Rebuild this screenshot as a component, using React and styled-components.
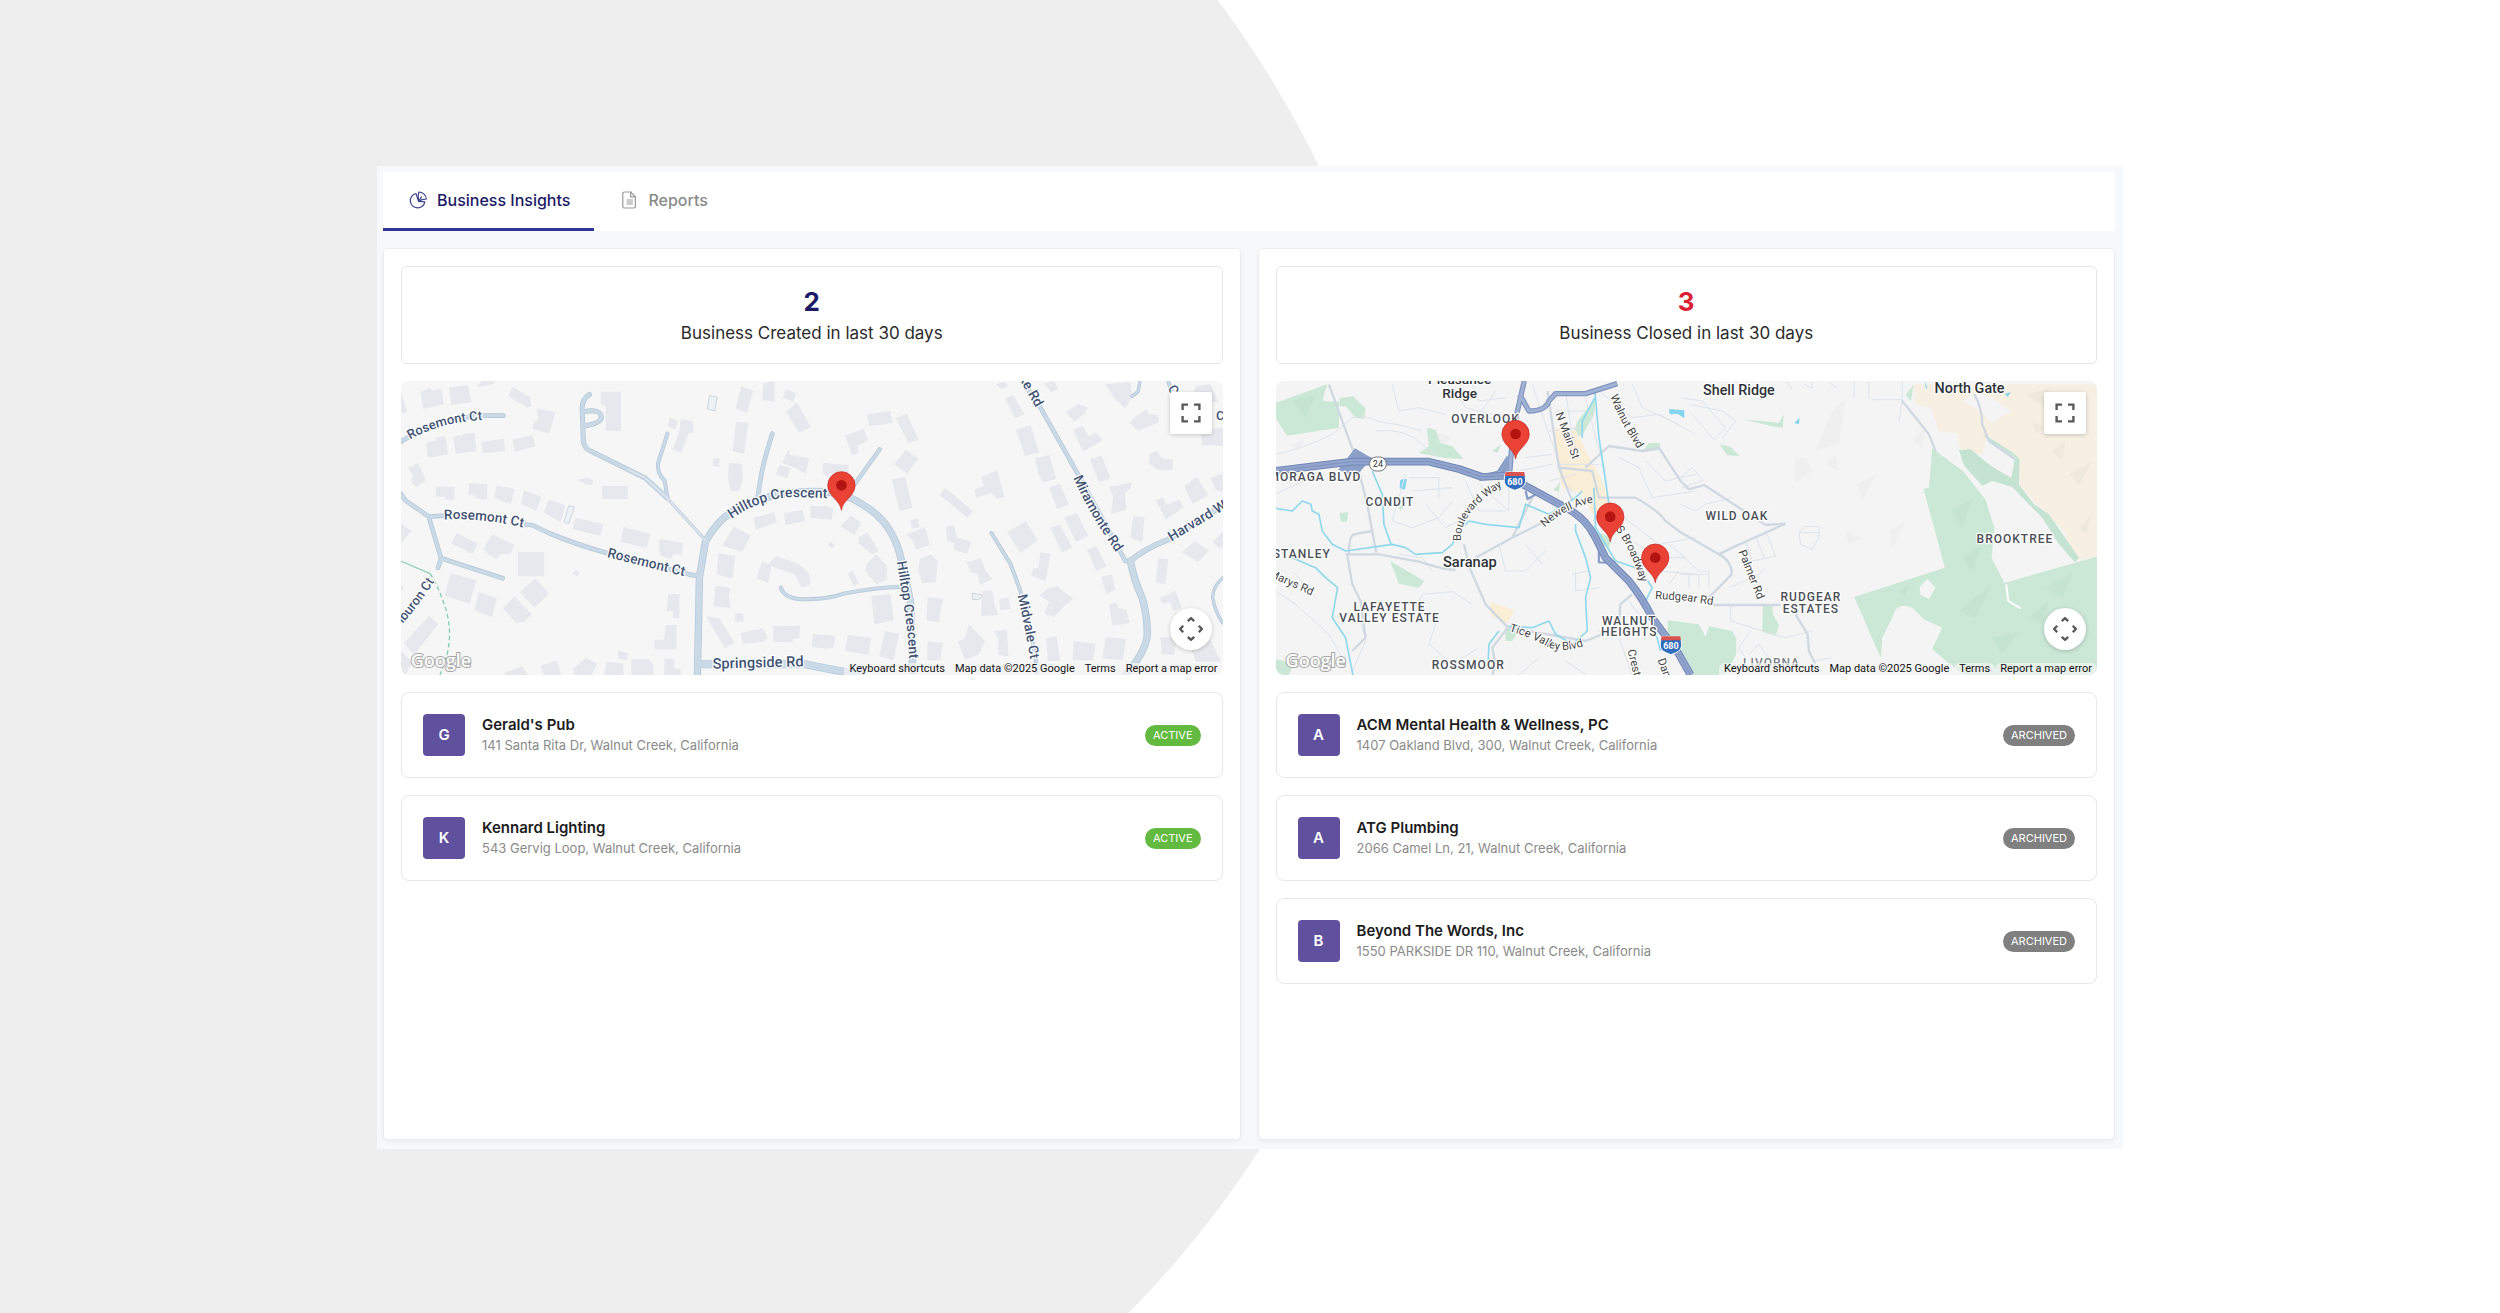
import React from "react";
import styled, { createGlobalStyle } from "styled-components";

const GlobalStyle = createGlobalStyle`
  *, *::before, *::after { box-sizing: border-box; }
  body { margin: 0; background: #fff; }
  button { font: inherit; }
`;

const Page = styled.div`
  display: flex;
  min-height: 100vh;
  padding: 166px 377px 164px;
  font-family: Inter, "Liberation Sans", sans-serif;
  color: #222;
  background: radial-gradient(circle at 413px 605px, #eeeeee 1006px, #ffffff 1007px);
`;

const Shell = styled.main`
  flex: 1;
  display: flex;
  flex-direction: column;
  gap: 17px;
  min-width: 0;
  padding: 6px 8px 9px 6px;
  background: #f7f8fa;
`;

const TabBar = styled.nav`
  display: flex;
  height: 59px;
  background: #fff;
`;

const Tab = styled.button`
  display: flex;
  align-items: center;
  gap: 10px;
  padding: 0 24px 0 26px;
  border: 0;
  border-bottom: 3px solid ${(p) => (p.$active ? "#2f3499" : "transparent")};
  background: none;
  font-size: 16px;
  line-height: 24px;
  font-weight: 500;
  color: ${(p) => (p.$active ? "#1b1a66" : "#8a8a8a")};
  cursor: pointer;
`;

const TabIcon = styled.svg`
  width: 18px;
  height: 18px;
  fill: none;
  stroke: ${(p) => (p.$active ? "#3f4390" : "#9a9a9a")};
  stroke-width: 1.2;
  stroke-linejoin: round;
  stroke-linecap: round;
`;

const Columns = styled.div`
  flex: 1;
  display: grid;
  grid-template-columns: repeat(2, minmax(0, 1fr));
  gap: 17px;
`;

const Card = styled.section`
  display: flex;
  flex-direction: column;
  gap: 17px;
  padding: 17px;
  border: 1px solid #ececee;
  border-radius: 5px;
  background: #fff;
  box-shadow: 0 2px 4px rgba(0, 0, 0, 0.05);
`;

const Stat = styled.div`
  padding: 19px 0 15px;
  border: 1px solid #e6e6e8;
  border-radius: 5px;
  text-align: center;
`;

const StatValue = styled.div`
  font-size: 26px;
  line-height: 32px;
  font-weight: 700;
  color: ${(p) => p.$color};
`;

const StatLabel = styled.div`
  font-size: 17px;
  line-height: 30px;
  color: #2a2a2a;
`;

const MapFrame = styled.div`
  position: relative;
  height: 294px;
  border-radius: 8px;
  overflow: hidden;
`;

const MapDrawing = styled.svg`
  display: block;
  width: 100%;
  height: 100%;
  font-family: Roboto, "Liberation Sans", sans-serif;
`;

const MapButton = styled.button`
  position: absolute;
  right: 11px;
  ${(p) => (p.$round ? "bottom: 25px;" : "top: 11px;")}
  display: grid;
  place-items: center;
  width: 42px;
  height: 42px;
  padding: 0;
  border: 0;
  border-radius: ${(p) => (p.$round ? "50%" : "2px")};
  background: #fff;
  box-shadow: 0 1px 4px rgba(0, 0, 0, 0.2);
  cursor: pointer;

  svg {
    width: 24px;
    height: 24px;
    fill: none;
    stroke: #5a5a5a;
    stroke-width: 2.4;
  }
`;

const MapFooter = styled.div`
  position: absolute;
  right: 0;
  bottom: 0;
  display: flex;
  font-family: Roboto, "Liberation Sans", sans-serif;
  font-size: 11px;
  line-height: 12px;
  color: #111;

  > * {
    padding: 0 5px;
    border: 0;
    border-radius: 6px 6px 0 0;
    background: rgba(245, 245, 245, 0.7);
    color: inherit;
    text-decoration: none;
    white-space: nowrap;
  }
`;

const List = styled.ul`
  display: flex;
  flex-direction: column;
  gap: 17px;
  margin: 0;
  padding: 0;
  list-style: none;
`;

const Row = styled.li`
  display: flex;
  align-items: center;
  gap: 17px;
  height: 86px;
  padding: 0 21px;
  border: 1px solid #e8e8ea;
  border-radius: 8px;
`;

const Avatar = styled.div`
  flex: none;
  width: 42px;
  border-radius: 4px;
  background: #60519f;
  color: #fff;
  font-size: 15px;
  line-height: 42px;
  font-weight: 600;
  text-align: center;
`;

const Info = styled.div`
  flex: 1;
  min-width: 0;
`;

const Name = styled.div`
  font-size: 15px;
  line-height: 21px;
  font-weight: 600;
  color: #1c1c1c;
`;

const Address = styled.div`
  font-size: 13px;
  line-height: 21px;
  color: #8a8a8a;
`;

const Badge = styled.span`
  padding: 0 8px;
  border-radius: 11px;
  background: ${(p) => (p.$archived ? "#808080" : "#63ba41")};
  color: #fff;
  font-size: 11px;
  line-height: 21px;
`;

/* ---------- map drawings ---------- */

const Building = styled.path`
  fill: #e7e8ed;
`;

const RoadEdge = styled.path`
  fill: none;
  stroke: #b3c6d9;
  stroke-width: ${(p) => p.$w};
  stroke-linecap: round;
  stroke-linejoin: round;
`;

const RoadFill = styled(RoadEdge)`
  stroke: ${(p) => p.$color || "#c9d9e6"};
`;

const Line = styled.path`
  fill: none;
  stroke: ${(p) => p.$color};
  stroke-width: ${(p) => p.$w};
  stroke-linejoin: round;
`;

const Label = styled.text`
  font-size: ${(p) => p.$size || 39}px;
  font-weight: ${(p) => p.$weight || 500};
  fill: ${(p) => p.$color || "#3f5373"};
  stroke: #fff;
  stroke-width: 7;
  stroke-linejoin: round;
  paint-order: stroke;
  text-anchor: ${(p) => p.$anchor || "start"};
`;

const Area = styled(Label)`
  font-size: 36px;
  letter-spacing: 3px;
`;

const Logo = styled.text`
  font-family: "Open Sans", Roboto, sans-serif;
  font-size: 54px;
  font-weight: 600;
  fill: #fff;
  stroke: #a6a6a6;
  stroke-width: 6;
  paint-order: stroke;
`;

const Pin = ({ x, y }) => (
  <g transform={`translate(${x} ${y})`}>
    <path d="M0 75C-3 45-41 33-41 0A41 41 0 0 1 41 0C41 33 3 45 0 75Z" fill="#ea4335" stroke="#c5221f" strokeWidth="2" />
    <circle r="16" fill="#b31412" />
  </g>
);

const Shield = ({ x, y }) => (
  <g transform={`translate(${x} ${y})`}>
    <path d="M-27-25H27C33-8 34 6 28 14C22 24 8 26 0 30C-8 26-22 24-28 14C-34 6-33-8-27-25Z" fill="#2f6dbd" stroke="#fff" strokeWidth="3" />
    <path d="M-28-25H28L30-13H-30Z" fill="#d9534f" />
    <text y="14" textAnchor="middle" fontSize="27" fontWeight="700" fill="#fff">680</text>
  </g>
);

const PathLabel = ({ id, d, children, ...rest }) => (
  <>
    <path id={id} d={d} fill="none" />
    <Label {...rest}>
      <textPath href={`#${id}`}>{children}</textPath>
    </Label>
  </>
);

const WEST_BUILDINGS =
  "M75 62L103 52L112 60L137 52L145 100L84 114Z M161 50L218 42L228 94L168 102Z M247 45L258 30H297L296 38L250 48Z M16 62L36 124L16 128Z " +
  "M352 47L403 78L408 104L396 110L339 76Z M424 112L480 124L462 188L411 174L417 150L428 147Z M616 62H677V180H631V104L616 98Z " +
  "M91 216L120 208L124 198L150 196L158 250L98 260Z M174 200L186 192L200 196L204 188L238 186L243 240L181 248Z M258 212L324 204L330 240L262 247Z M350 206L411 192L420 226L358 242Z " +
  "M38 290L68 276L92 328L62 348L48 334L52 314Z M121 348H177V386H150V378L122 376Z M221 336L276 340L274 386L240 382V374L219 370Z M304 344L358 354L346 398L318 390L296 378Z M386 358L438 378L422 420L376 398Z M460 386L510 402L496 454L446 424Z " +
  "M545 326L576 320L593 326L590 342L570 340Z M620 345H697V384H620Z M540 440L624 460L614 494L532 474Z M684 468L764 488L754 531L675 512Z M793 504L864 516L858 552L836 548L826 564L796 554L790 530Z " +
  "M184 486L246 518L232 548L168 518Z M290 490L356 522L346 548L316 550L304 563L280 552L264 534Z M368 543H446V616H368Z M420 621L461 668L417 710L374 664Z " +
  "M166 607L243 628L222 698L148 674Z M250 662L304 682L290 738L237 718Z M358 677L410 730L386 752L362 755L322 712Z M540 596L552 604L546 616L532 608Z " +
  "M102 734L128 760L56 852L26 816Z M16 456L48 480L16 518Z M16 640L26 652L16 660Z M16 840L50 872L30 912H16Z " +
  "M818 669H852V741H834L832 720H814Z M811 762H843V834H777V806H806Z M328 905L380 886L398 912H328Z M434 884L484 869L498 912H446Z M534 892L572 860L606 878L588 912H536Z M668 838L698 846L694 868L668 862Z M634 872L684 878V912H626Z M708 864H760L774 880V912H708Z M808 862L836 864V890L856 896V912H806Z " +
  "M1038 46L1074 60L1054 126L1020 112Z M1104 36L1138 30V92L1100 86Z M1172 54L1202 66L1194 92L1162 80Z M1204 94L1246 168L1212 186L1172 122Z " +
  "M1022 152L1058 156L1046 248L1012 240Z M824 140L848 150L840 176L816 164Z M856 144L892 150L894 184L880 186L858 246L832 236L852 178Z M954 262L974 264L970 288L952 284Z M1000 276L1040 278L1042 330L1030 360H1006L998 320Z " +
  "M1166 262L1180 234L1184 252L1242 262L1230 308L1200 290L1160 276Z M1152 282L1186 292L1174 322L1142 310Z M1284 276H1300V320L1282 308Z " +
  "M1074 440L1136 424L1144 454L1082 476Z M1166 426L1222 416L1228 450L1170 462Z M1246 406H1300V444L1246 440Z M1016 466L1066 494L1040 542L980 524Z M970 546L1020 556L1010 624L964 610Z M960 644L1004 650L1000 676L1006 712L954 706Z " +
  "M1100 570L1128 584L1118 636L1084 622Z M1142 556L1210 580L1240 606L1246 640L1220 650L1196 610L1140 590L1120 580Z M1020 726L1044 728L1044 752L1018 752Z M932 736L972 742L1018 816L988 832Z " +
  "M1036 786L1102 772L1118 800L1102 812L1042 818Z M1134 766L1214 764L1212 802L1192 804V814L1134 812Z M1252 790L1300 794V834L1250 828Z";

const EAST_BUILDINGS =
  "M170 130L240 120L246 156L176 166Z M256 142L290 128L324 206L294 216Z M104 194L160 174L172 208L142 224L144 246L124 252Z M38 276L114 282V310L40 308Z M286 236L324 264L290 308L252 280Z " +
  "M244 326L284 318L306 410L268 420Z M0 404L68 412L64 446L0 440Z M122 434L152 454L132 492L90 466Z M144 500L170 484L206 540L186 550L146 520Z M60 512L74 522L66 532L52 522Z " +
  "M198 550L230 586L228 626L198 640L164 600L170 576Z M112 608L128 600L146 636L130 644Z M298 450L320 442L328 468L306 474Z M288 490L344 468L358 522L318 536L308 510Z M328 564L362 550L382 570L376 634L336 636L324 600Z " +
  "M182 676L240 670L250 748L192 760Z M352 678L400 684L392 708L386 754L348 748Z M8 790L76 794L68 832L6 824Z M112 792L182 800L174 852L104 840Z M224 780L266 788L250 868L206 856Z M352 812L398 816L390 868H350Z " +
  "M404 350L488 420L470 440L388 372Z M406 468L430 462L440 500L482 512L470 548L430 536V516L410 510Z M514 318L560 298L582 378L560 384L544 366L498 380L492 356L520 344Z " +
  "M590 484L646 450L682 508L630 546Z M468 574L512 562L526 600L546 624L508 642L502 608L482 604Z M516 660H546L552 700L564 732L512 736Z M566 684L594 680L600 714L570 718Z M476 760L524 810L506 850L464 866L442 812L464 800Z M552 780L590 776L594 856L564 852V806Z " +
  "M690 544L720 548L706 630L662 614L670 590L684 592Z M712 652L740 646L788 684L760 706L732 738L702 728L716 692L688 674Z M708 802L738 796L750 870H712Z M790 810L856 818L848 868H786Z M886 798L946 804L938 868L876 862Z " +
  "M556 40L584 32L592 46L572 54Z M584 82L608 72L642 130L614 142Z M700 36L730 30L744 54L722 64Z M616 176L660 162L686 244L644 256Z M674 262L716 252L738 324L698 334L684 310Z M716 350L748 338L776 400L740 414Z " +
  "M766 124L804 98L832 110L822 128L792 152Z M788 176L816 164L836 196L856 184L876 208L818 242Z M838 264L874 254L900 322L866 334Z M762 440L800 426L834 494L796 512Z M720 470L748 460L786 530L754 544Z M896 348L964 334L960 354L944 364L948 416L902 428L908 376Z " +
  "M830 536L858 524L888 586L858 600Z M872 618L904 610L914 656L888 670Z M896 698L918 696L926 712L948 718L958 756L906 764Z M968 436L1002 438L996 514L960 500Z " +
  "M884 40L960 34L966 74L944 112L914 84Z M956 154L1006 114L1016 130L1042 132L1046 154L982 180Z M1018 248L1040 240L1056 262L1088 266L1086 298L1042 296L1016 278Z M1170 176L1240 170V224L1174 222Z M1156 46L1200 40L1214 66H1150Z M1148 60L1204 50L1224 94H1152Z " +
  "M1200 320L1240 306V364L1216 356Z M1122 346L1158 318L1194 372L1146 400Z M1036 388L1056 380L1070 402L1106 386L1120 410L1066 446Z M1114 544L1154 510L1196 540L1162 572Z M1206 512L1240 480V528L1226 530Z M1044 562L1074 564L1064 640L1036 634Z " +
  "M1048 680L1096 660L1114 710L1088 720L1080 694L1056 698Z M1050 798L1100 800L1090 852L1054 850Z M1142 834L1200 808L1232 872H1156Z";

const CreatedMap = () => {
  const roads = [
    [14, "M16 212L60 186Q130 140 270 134H324"],
    [14, "M16 368L30 388L100 437L137 562L128 590M100 437L150 434M380 460L410 462L460 486Q540 520 632 545L880 610L916 616M137 562L322 622"],
    [15, "M582 70Q560 85 560 110L564 214Q570 236 590 242L690 292L748 320L814 380M566 122Q618 112 618 140Q614 158 570 164"],
    [12, "M816 188L788 276Q784 306 808 330L816 380"],
    [14, "M1131 188Q1104 270 1096 320L1086 384"],
    [22, "M906 912L912 620L930 512Q970 440 1030 410Q1120 370 1200 364Q1330 350 1400 400Q1490 450 1516 560L1545 690L1552 900"],
    [24, "M912 880H960L1230 880Q1330 900 1400 912"],
    [12, "M1156 650Q1166 680 1210 684Q1290 688 1345 668Q1430 650 1520 647"],
    [13, "M1370 350L1453 235"],
    [14, "M1880 30L1935 110L2048 310L2190 570"],
    [22, "M2205 570Q2215 625 2240 680Q2258 740 2255 800Q2245 850 2190 912"],
    [17, "M2203 572Q2240 536 2320 505L2482 404"],
    [12, "M1788 486L1846 580L1875 660L1920 850L1924 912"],
    [10, "M2234 30L2228 62L2210 76"],
    [12, "M2318 30L2340 90"],
    [10, "M2482 620Q2450 650 2452 680Q2458 720 2482 756"],
  ];
  return (
    <MapDrawing viewBox="16 30 2466 882" preserveAspectRatio="xMidYMid slice" role="img" aria-label="Map of created businesses">
      <rect x="0" y="0" width="2520" height="940" fill="#f6f6f6" />
      <Building d={WEST_BUILDINGS} />
      <Building d={EAST_BUILDINGS} transform="translate(1245 0)" />
      <path d="M942 74L965 78L958 120L936 114ZM520 404L537 408L520 458L506 452ZM1730 666L1760 672L1754 684L1732 686Z" fill="#eef1f4" stroke="#cdd6e0" strokeWidth="3" />
      <Line d="M16 570L104 608" $color="#8fd0b6" $w={4} />
      <Line d="M104 608Q126 640 150 710Q172 780 155 850L134 912" $color="#7fceb0" $w={4} strokeDasharray="13 9" />
      {roads.map(([w, d]) => <RoadEdge key={d} $w={w} d={d} />)}
      <RoadEdge $w={9} d="M700 296L748 320L814 380L930 508" />
      {roads.map(([w, d]) => <RoadFill key={d} $w={w - 4} d={d} />)}
      <RoadFill $w={5} $color="#dfe5ec" d="M700 296L748 320L814 380L930 508" />
      <PathLabel id="rosemont-a" d="M44 206Q140 150 280 146">Rosemont Ct</PathLabel>
      <PathLabel id="rosemont-b" d="M146 446Q270 440 400 474" $size={41}>Rosemont Ct</PathLabel>
      <PathLabel id="rosemont-c" d="M634 558L900 624" $size={41}>Rosemont Ct</PathLabel>
      <PathLabel id="tiburon" d="M6 776Q76 700 144 588">Tiburon Ct</PathLabel>
      <PathLabel id="hilltop-a" d="M1008 444Q1100 380 1200 378L1360 384" $size={42}>Hilltop Crescent</PathLabel>
      <PathLabel id="hilltop-b" d="M1504 572Q1522 680 1536 780L1546 930" $size={41}>Hilltop Crescent</PathLabel>
      <PathLabel id="springside" d="M952 893L1260 885" $size={44}>Springside Rd</PathLabel>
      <PathLabel id="lake-rd" d="M1870 22L1950 160" $size={41}>ke Rd</PathLabel>
      <PathLabel id="miramonte" d="M2034 320Q2080 430 2180 570" $size={41}>Miramonte Rd</PathLabel>
      <PathLabel id="midvale" d="M1866 674Q1888 760 1910 900" $size={41}>Midvale Ct</PathLabel>
      <PathLabel id="harvard" d="M2328 512L2560 372" $size={42}>Harvard Way</PathLabel>
      <PathLabel id="court-c" d="M2316 52L2336 86">C</PathLabel>
      <Label x="2462" y="148">C</Label>
      <Pin x={1338} y={343} />
      <Logo x="46" y="889">Google</Logo>
    </MapDrawing>
  );
};

const ClosedMap = () => {
  const minor =
    "M30 370Q110 330 160 310M30 250Q120 230 200 190L260 140Q300 130 340 152Q410 160 470 180M380 40L400 120L460 110L540 130M560 50L600 110L680 130M330 180Q420 170 470 220L520 260M420 310L400 380L380 450L440 470L520 440L560 390M430 320H520V380M440 360L560 350M480 400L540 470L600 440" +
    "M640 340L730 420V340M600 330L640 420H720M500 600L470 560L400 550M700 520L720 600L780 600L840 540M780 520L830 580M470 670Q440 720 510 760L490 820L560 880L640 830M470 670L560 662L620 700M200 740L280 730L300 810L260 900M30 660L90 700L190 790L230 860M80 600L150 680" +
    "M1000 60L1100 140L1180 130L1290 190M1100 40L1130 110L1240 160M1140 270L1200 330L1290 310M1060 260L1120 290L1160 380L1290 360M1050 420L1180 520L1290 500M1080 500L1180 560H1260L1210 520M930 600V660L1000 650M920 610L970 600M1180 600L1290 610M1090 690L1140 760M1210 640L1240 600" +
    "M800 40L850 190L890 300M960 80L990 200L1020 300M900 60L930 260M870 120H960M850 180L950 170M880 280H1000M760 300L860 280M780 260L860 250M900 340L960 400M850 330L930 310M690 60L640 130L730 160M620 40L640 90L720 80M900 870L960 910M820 860L760 912M1000 780L1060 800L1100 912" +
    "M1245 80L1310 90L1380 170L1345 205L1280 130M1270 100L1370 120L1410 150L1370 200M1245 320L1280 290L1312 328L1250 350M1245 400L1290 420L1320 400L1400 380M1245 550L1300 600H1330V650M1245 610H1325M1270 610V650M1300 610V650M1600 485L1620 466H1660V500L1640 535L1605 520ZM1600 485H1660" +
    "M1440 510L1460 570L1530 556L1500 478M1470 496L1496 562M1395 700V750L1490 780L1560 800L1640 780M1455 780L1420 830L1440 860M1450 850L1480 820L1500 850L1530 870M1640 870L1700 860M1390 650L1480 610L1500 590M1560 30L1580 55M1615 40L1640 52L1640 32M1690 34L1715 52M1765 30V80M1810 30V84M1910 30V90M1820 86H1910L1900 150";
  const arterial =
    "M190 40L270 260L305 400L332 545M240 550H340L460 572L530 592L570 597M250 548Q250 495 265 490L320 480M245 552L260 640L285 690L300 800L260 840M595 520L612 590L660 700L728 770M728 768L680 830L690 880L680 912M630 560L740 500L900 420M740 500L760 460L800 380" +
    "M846 60L880 290L920 390M880 290L980 300L1000 380L1110 380Q1180 420 1200 450L1245 484L1360 550L1400 530L1560 458M960 290L1030 225L1130 240L1180 230L1245 330L1270 355L1316 342L1500 462L1560 458M1360 550Q1400 570 1398 610L1330 680M1340 702H1545M1590 730L1626 790L1630 840L1650 880M730 770L960 810L1060 770L1064 700L1100 670" +
    "M1910 90L1990 190L2010 240M2126 70Q2150 110 2150 160L2170 210L2250 266";
  const highway =
    "M30 300L160 284L260 272H490L580 294L650 318L720 314L790 350L900 410Q960 440 990 500L1020 560L1090 630Q1130 680 1160 740L1240 850L1275 912";
  const ramps = "M776 30L742 180L732 312M762 70L790 120Q840 120 850 90L870 68H960L1055 38M640 322L700 306L730 260";
  const slipRoads = "M780 360L786 384L830 360M1000 520V574L1030 575";
  return (
    <MapDrawing viewBox="30 30 2467 882" preserveAspectRatio="xMidYMid slice" role="img" aria-label="Map of closed businesses">
      <rect x="0" y="0" width="2540" height="940" fill="#f4f4f4" />
      <path d="M1700 120L1740 84L1720 220L1650 240ZM1590 262L1620 258L1640 300L1590 336ZM1680 280L1710 250L1720 300ZM1775 340L1830 310L1790 390ZM1870 480L1920 450L1880 530ZM1940 210L1980 170L1970 230ZM1740 480L1790 500L1750 520ZM500 180L560 200L520 230ZM80 220L120 200L100 240Z" fill="#f0eff0" />
      <g fill="#cbe7d6">
        <path d="M30 96L185 40L170 90L220 92V170L64 194L30 140ZM222 80L262 76L300 112L296 144L270 140L240 106H222ZM484 170L510 176L524 216L560 226L594 264L540 262L460 246L490 226ZM680 240L706 220L696 246ZM960 120L990 80L986 130L948 196L922 190L936 150ZM1150 216H1182V236L1130 244ZM222 426L248 424L244 452H226ZM374 570L476 630L460 650L400 638ZM864 358L884 332L880 362ZM990 480L1040 500L1030 532L1008 520ZM720 770L760 776L740 810H720ZM30 864L84 880L70 912H30ZM400 410L414 380L418 400L404 420Z" />
        <path d="M1430 144L1540 156L1554 130L1552 170L1520 166ZM1362 220L1395 228L1422 256L1385 252ZM1206 748L1300 760L1320 798L1330 766L1400 780L1412 802V850L1380 912H1275L1206 800ZM1492 700H1520L1522 730L1540 762L1530 796L1490 782ZM1920 72L1945 40L1936 90Z" />
        <path d="M2000 232L2062 278L2092 300L2160 386L2186 470L2178 560L2216 636L2497 556V912H2090L2000 834L2030 770L1975 745L1940 710Q1890 690 1880 740L1850 800L1846 862L1766 678L2038 590L1974 354L1990 350Z" />
      </g>
      <path d="M1945 40H2497V556L2430 568L2395 480L2310 395L2262 340L2260 262L2200 222L2165 190L2150 252L2085 238L2076 186L2020 182L1998 110L1950 100Z" fill="#f6efe2" />
      <path d="M2080 238L2115 234L2172 282L2236 320L2246 270L2252 262L2180 216L2150 192L2172 200L2240 244L2262 264L2260 340L2305 400L2350 430L2440 560L2428 574L2380 520L2330 440L2290 400L2240 348L2180 330L2150 344L2110 300L2096 284Z" fill="#c5e3d2" />
      <path d="M2150 252L2172 246L2244 280L2238 318L2180 284Z" fill="#f4f4f4" />
      <path d="M2090 90L2130 64L2180 80L2236 120L2180 156L2140 120Z" fill="#f4f4f4" />
      <path d="M1962 648L1985 624L2010 650L1990 684L1965 672Z" fill="#f4f4f4" />
      <Line d="M2222 640L2228 690L2265 712" $color="#ffffff" $w={6} />
      <path d="M2280 70L2350 50L2340 110ZM2360 240L2400 210L2390 270ZM2410 310L2480 270L2440 340ZM2300 150L2340 170L2310 190ZM2440 470L2480 430L2460 490Z" fill="#efe9dc" />
      <path d="M2060 420L2120 380L2090 470ZM2090 560L2150 520L2120 600ZM1900 660L1930 640L1920 680ZM2080 720L2180 640L2130 740ZM2290 740L2350 690L2330 760ZM2340 650L2420 610L2390 680ZM2180 800L2260 780L2210 850ZM80 90L150 70L120 140Z" fill="#c4e3d1" />
      <path d="M866 170L930 176L966 250L1010 330L1034 400L980 430L950 370L890 350L872 260ZM676 692L748 718L722 760L674 730ZM650 310L720 312L700 330Z" fill="#fbeed7" />
      <path d="M404 326L424 324L418 356L402 352ZM1210 114L1256 118V142L1236 128L1212 130ZM1586 156L1602 140L1600 160ZM2218 68L2236 64L2226 78ZM1978 30L1986 54L1980 50Z" fill="#83d5ee" />
      <Line d={minor} $color="#dde3eb" $w={3} />
      <Line d={arterial} $color="#d0d8e1" $w={7} />
      <Line
        d="M30 412L80 420L110 390L136 400L140 420L160 430L170 480L200 520L240 540L380 520L420 530L450 550L530 545L560 520L580 480L610 450L660 460L760 470L780 400L850 430L930 380L950 360M320 300L350 370L355 460L376 520M988 60L1000 200L1020 330L1030 400M988 80L950 150V200M80 560L150 590L180 620L216 650L200 740L240 800L262 912M730 765L800 770L850 750L870 790L920 820L965 780L960 680L975 620L960 560L930 480V460M668 870L670 820L700 780M985 350L990 470L1050 570L1110 590M1130 700Q1160 740 1185 840M1140 620L1160 650L1140 690"
        $color="#8fd8ec"
        $w={5}
      />
      <Line d={ramps} $color="#7f94c0" $w={16} />
      <Line d={ramps} $color="#a1b2d4" $w={9} />
      <Line d={slipRoads} $color="#8b9fc8" $w={7} />
      <path d="M218 296L268 232L330 268L306 276L270 318Z M700 300L730 250V310Z" fill="#8b9fc8" />
      <Line d={highway} $color="#7186b6" $w={23} />
      <Line d={highway} $color="#91a4cd" $w={17} />
      <Line d={highway} $color="#8094c1" $w={3} />
      <g>
        <rect x="312" y="258" width="50" height="42" rx="20" fill="#fff" stroke="#777" strokeWidth="3" />
        <text x="337" y="289" textAnchor="middle" fontSize="27" fill="#333">24</text>
      </g>
      <Shield x={748} y={328} />
      <Shield x={1216} y={821} />
      <Label x="582" y="38" $size={41} $color="#2e3238" $anchor="middle">Pleasance</Label>
      <Label x="582" y="80" $size={41} $color="#2e3238" $anchor="middle">Ridge</Label>
      <Area x="660" y="155" $color="#4a4e55" $anchor="middle">OVERLOOK</Area>
      <Area x="148" y="331" $color="#4a4e55" $anchor="middle">MORAGA BLVD</Area>
      <Area x="373" y="404" $color="#4a4e55" $anchor="middle">CONDIT</Area>
      <Area x="196" y="560" $color="#4a4e55" $anchor="end">STANLEY</Area>
      <Area x="372" y="719" $color="#4a4e55" $anchor="middle">LAFAYETTE</Area>
      <Area x="372" y="754" $color="#4a4e55" $anchor="middle">VALLEY ESTATE</Area>
      <Area x="608" y="895" $color="#4a4e55" $anchor="middle">ROSSMOOR</Area>
      <Area x="1091" y="761" $color="#4a4e55" $anchor="middle">WALNUT</Area>
      <Area x="1091" y="796" $color="#4a4e55" $anchor="middle">HEIGHTS</Area>
      <Label x="613" y="589" $size={44} $color="#2e3238" $anchor="middle">Saranap</Label>
      <Label x="1420" y="72" $size={43} $color="#2e3238" $anchor="middle">Shell Ridge</Label>
      <Label x="2112" y="67" $size={43} $color="#2e3238" $anchor="middle">North Gate</Label>
      <Area x="1414" y="447" $color="#4a4e55" $anchor="middle">WILD OAK</Area>
      <Area x="2248" y="515" $color="#4a4e55" $anchor="middle">BROOKTREE</Area>
      <Area x="1636" y="691" $color="#4a4e55" $anchor="middle">RUDGEAR</Area>
      <Area x="1636" y="726" $color="#4a4e55" $anchor="middle">ESTATES</Area>
      <Area x="1518" y="887" $color="#7a7e85" $anchor="middle">LIVORNA</Area>
      <PathLabel id="n-main" d="M870 128L930 290" $size={34} $weight={400} $color="#444">N Main St</PathLabel>
      <PathLabel id="walnut" d="M1034 76Q1060 150 1140 270" $size={34} $weight={400} $color="#444">Walnut Blvd</PathLabel>
      <PathLabel id="boulevard" d="M586 510Q580 420 720 340" $size={33} $weight={400} $color="#444">Boulevard Way</PathLabel>
      <PathLabel id="newell" d="M838 470Q900 406 1000 392" $size={34} $weight={400} $color="#444">Newell Ave</PathLabel>
      <PathLabel id="broadway" d="M1050 474Q1100 540 1130 650" $size={34} $weight={400} $color="#444">S Broadway</PathLabel>
      <PathLabel id="rudgear" d="M1168 684L1250 688L1370 706" $size={34} $weight={400} $color="#444">Rudgear Rd</PathLabel>
      <PathLabel id="marys" d="M8 616L180 692" $size={34} $weight={400} $color="#444">Marys Rd</PathLabel>
      <PathLabel id="tice" d="M730 780Q800 800 850 830Q910 850 990 810" $size={34} $weight={400} $color="#444">Tice Valley Blvd</PathLabel>
      <PathLabel id="palmer" d="M1418 542L1490 720" $size={34} $weight={400} $color="#444">Palmer Rd</PathLabel>
      <PathLabel id="crest" d="M1086 838L1122 990" $size={34} $weight={400} $color="#444">Crest Ave</PathLabel>
      <PathLabel id="danville" d="M1176 866L1220 990" $size={34} $weight={400} $color="#444">Danville</PathLabel>
      <Pin x={750} y={189} />
      <Pin x={1034} y={437} />
      <Pin x={1169} y={560} />
      <Logo x="60" y="889">Google</Logo>
    </MapDrawing>
  );
};

const BusinessMap = ({ children }) => (
  <MapFrame>
    {children}
    <MapButton type="button" aria-label="Toggle fullscreen view">
      <svg viewBox="0 0 24 24"><path d="M3.6 9V3.6H9M15 3.6h5.4V9M20.4 15v5.4H15M9 20.4H3.6V15" /></svg>
    </MapButton>
    <MapButton type="button" $round aria-label="Map camera controls">
      <svg viewBox="0 0 24 24"><path d="M8.8 4.2L12 1.2l3.2 3M8.8 19.8l3.2 3 3.2-3M4.2 8.8L1.2 12l3 3.2M19.8 8.8l3 3.2-3 3.2" /></svg>
    </MapButton>
    <MapFooter>
      <button type="button">Keyboard shortcuts</button>
      <span>Map data ©2025 Google</span>
      <a href="#terms">Terms</a>
      <a href="#report">Report a map error</a>
    </MapFooter>
  </MapFrame>
);

const Panel = ({ value, color, label, map, items, archived }) => (
  <Card>
    <Stat>
      <StatValue $color={color}>{value}</StatValue>
      <StatLabel>{label}</StatLabel>
    </Stat>
    <BusinessMap>{map}</BusinessMap>
    <List>
      {items.map(([name, address]) => (
        <Row key={name}>
          <Avatar>{name[0]}</Avatar>
          <Info>
            <Name>{name}</Name>
            <Address>{address}</Address>
          </Info>
          <Badge $archived={archived}>{archived ? "ARCHIVED" : "ACTIVE"}</Badge>
        </Row>
      ))}
    </List>
  </Card>
);

const created = [
  ["Gerald's Pub", "141 Santa Rita Dr, Walnut Creek, California"],
  ["Kennard Lighting", "543 Gervig Loop, Walnut Creek, California"],
];

const closed = [
  ["ACM Mental Health & Wellness, PC", "1407 Oakland Blvd, 300, Walnut Creek, California"],
  ["ATG Plumbing", "2066 Camel Ln, 21, Walnut Creek, California"],
  ["Beyond The Words, Inc", "1550 PARKSIDE DR 110, Walnut Creek, California"],
];

export default function App() {
  return (
    <>
      <GlobalStyle />
      <Page>
        <Shell>
          <TabBar>
            <Tab type="button" $active aria-current="page">
              <TabIcon $active viewBox="0 0 18 18">
                <path d="M7 2.5A7.3 7.3 0 1 0 15.8 10.8L9.6 10.4Z" />
                <path d="M9.8 1C14 1 17.2 4.2 17.3 8L13.2 8.6L9.6 10.2L9.2 5.4Z" />
                <path d="M9.6 10.2L12.5 5.8" />
              </TabIcon>
              Business Insights
            </Tab>
            <Tab type="button">
              <TabIcon viewBox="0 0 18 18">
                <path d="M4.4 1H10.6L15.4 5.8V15.4A1.6 1.6 0 0 1 13.8 17H4.4A1.6 1.6 0 0 1 2.8 15.4V2.6A1.6 1.6 0 0 1 4.4 1Z" />
                <path d="M10.6 1V5.8H15.4M7 9H12.4M7 11H12.4M7 13H12.4" />
              </TabIcon>
              Reports
            </Tab>
          </TabBar>
          <Columns>
            <Panel value="2" color="#1b1a66" label="Business Created in last 30 days" map={<CreatedMap />} items={created} />
            <Panel value="3" color="#dc1f35" label="Business Closed in last 30 days" map={<ClosedMap />} items={closed} archived />
          </Columns>
        </Shell>
      </Page>
    </>
  );
}
